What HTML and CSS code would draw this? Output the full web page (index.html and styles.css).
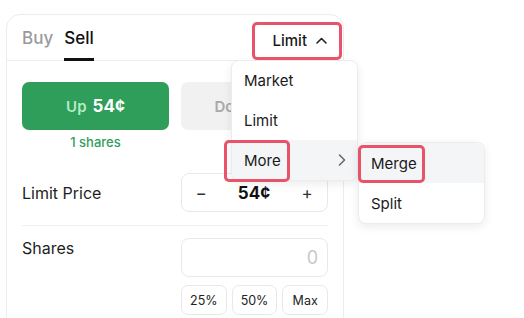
FILE: index.html
```html
<!DOCTYPE html>
<html>
<head>
<meta charset="utf-8">
<link rel="stylesheet" href="styles.css">
</head>
<body>
<div class="stage">
  <div class="card">
    <div class="head">
      <div class="tabs">
        <span class="tab">Buy</span>
        <span class="tab active">Sell</span>
      </div>
      <div class="type-btn">Limit
        <svg class="chev-up" width="11" height="7" viewBox="0 0 11 7"><path d="M1 6L5.5 1.5L10 6" fill="none" stroke="#222" stroke-width="1.6" stroke-linecap="round" stroke-linejoin="round"/></svg>
      </div>
    </div>
    <div class="body">
      <div class="outcomes">
        <div class="outcome-col">
          <div class="outcome up"><span class="lbl">Up</span><span class="price">54¢</span></div>
          <div class="shares-note">1 shares</div>
        </div>
        <div class="outcome-col">
          <div class="outcome down"><span class="lbl">Down</span><span class="price">46¢</span></div>
        </div>
      </div>
      <div class="row">
        <div class="label">Limit Price</div>
        <div class="stepper"><span class="op">−</span><span class="val">54¢</span><span class="op">+</span></div>
      </div>
      <div class="sep"></div>
      <div class="row top">
        <div class="label">Shares</div>
        <div class="field">
          <div class="input">0</div>
          <div class="pcts"><span class="pct">25%</span><span class="pct">50%</span><span class="pct">Max</span></div>
        </div>
      </div>
    </div>
  </div>

  <div class="menu">
    <div class="item">Market</div>
    <div class="item">Limit</div>
    <div class="item hover">More
      <svg class="chev-r" width="8" height="12" viewBox="0 0 8 12"><path d="M1.5 1L6.5 6L1.5 11" fill="none" stroke="#666" stroke-width="1.5" stroke-linecap="round" stroke-linejoin="round"/></svg>
    </div>
  </div>
  <div class="submenu">
    <div class="item hover">Merge</div>
    <div class="item">Split</div>
  </div>

  <div class="mark mark-limit"></div>
  <div class="mark mark-more"></div>
  <div class="mark mark-merge"></div>
</div>
</body>
</html>
```

FILE: styles.css
```css
* { box-sizing: border-box; }
html, body { margin: 0; padding: 0; background: #fff; }
body { font-family: Inter, "Noto Sans", sans-serif; color: #1c1c1c; }
.stage { position: relative; width: 524px; height: 318px; overflow: hidden; }

.card {
  position: absolute; left: 6px; top: 14px; width: 338px; height: 330px;
  border: 1px solid #ececec; border-radius: 14px; background: #fff;
}
.head {
  height: 46px; display: flex; align-items: stretch; justify-content: space-between;
  border-bottom: 1px solid #eeeeee; padding: 0 0 0 15px;
}
.tabs { display: flex; gap: 11px; align-items: stretch; }
.tab {
  font-size: 17px; font-weight: 500; color: #9a9a9a; display: flex; align-items: center;
  padding-top: 3px; border-bottom: 3px solid transparent; margin-bottom: -1px;
}
.tab.active { color: #111; border-bottom-color: #111; }
.type-btn {
  display: flex; align-items: center; gap: 9px; font-size: 15px; font-weight: 500; color: #1a1a1a;
  padding: 0 14px 0 23px; margin: 6px 2px 0 0;
}

.body { padding: 21px 15px 0 15px; display: flex; flex-direction: column; }
.outcomes { display: flex; gap: 12px; }
.outcome-col { flex: 1; display: flex; flex-direction: column; align-items: center; }
.outcome {
  width: 100%; height: 48px; border-radius: 7px; display: flex; align-items: center; justify-content: center;
  gap: 6px;
}
.outcome.up { background: #2f9e5a; }
.outcome.down { background: #f1f1f1; }
.outcome .lbl { font-size: 15px; font-weight: 600; }
.outcome .price { font-size: 17px; font-weight: 700; }
.outcome.up .lbl { color: #b4ecc6; }
.outcome.up .price { color: #fff; }
.outcome.down .lbl { color: #a9a9a9; }
.outcome.down .price { color: #a9a9a9; }
.shares-note { margin-top: 3px; font-size: 13px; font-weight: 500; color: #2f9e5a; line-height: 18px; }

.row { display: flex; justify-content: space-between; align-items: center; margin-top: 22px; }
.row.top { align-items: flex-start; margin-top: 12px; }
.label { font-size: 16px; font-weight: 400; color: #1e1e1e; line-height: 20px; }
.stepper {
  width: 147px; height: 39px; border: 1px solid #e8e8e8; border-radius: 8px;
  display: flex; align-items: center; justify-content: space-between; padding: 0 14px 0 13px;
}
.stepper .op { font-size: 17px; color: #333; width: 12px; text-align: center; }
.stepper .val { font-size: 17px; font-weight: 700; color: #111; }
.sep { height: 1px; background: #efefef; margin-top: 13px; }

.field { width: 147px; display: flex; flex-direction: column; gap: 8px; }
.input {
  height: 39px; border: 1px solid #e8e8e8; border-radius: 8px; text-align: right; padding: 0 9px;
  font-size: 18px; line-height: 37px; color: #c8c8c8;
}
.pcts { display: flex; gap: 5px; }
.pct {
  flex: 1; height: 30px; border: 1px solid #e8e8e8; border-radius: 7px; font-size: 12.5px; font-weight: 400;
  display: flex; align-items: center; justify-content: center; color: #222;
}

.menu, .submenu {
  position: absolute; background: #fff; border: 1px solid #ececec; border-radius: 8px;
  box-shadow: 0 3px 10px rgba(0,0,0,0.08); overflow: hidden;
}
.menu { left: 231px; top: 60px; width: 127px; }
.submenu { left: 358px; top: 142px; width: 127px; }
.item {
  height: 40px; display: flex; align-items: center; justify-content: space-between;
  padding: 0 11px 0 12px; font-size: 15px; font-weight: 400; color: #1a1a1a;
}
.menu .item:first-child { margin-top: -1px; }
.item.hover { background: #f4f5f7; }

.mark { position: absolute; border: 3px solid #e9536a; border-radius: 5px; }
.mark-limit { left: 252px; top: 22px; width: 90px; height: 38px; }
.mark-more { left: 224px; top: 140px; width: 66px; height: 42px; }
.mark-merge { left: 358px; top: 145px; width: 67px; height: 38px; }
```
